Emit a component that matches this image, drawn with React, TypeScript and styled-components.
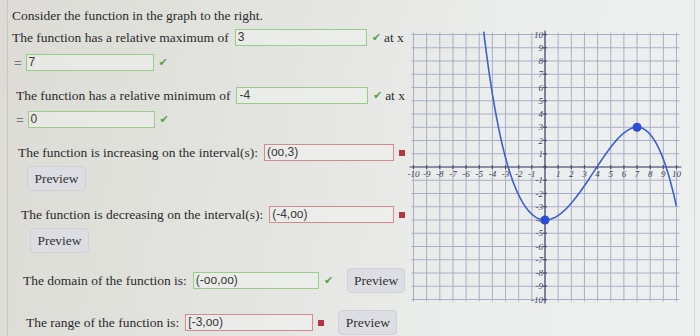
import React from 'react';
import styled, { createGlobalStyle } from 'styled-components';

const GlobalStyle = createGlobalStyle`
  html, body {
    margin: 0;
    padding: 0;
    width: 700px;
    height: 336px;
    overflow: hidden;
    background: #e2e2dd;
  }
`;

const Page = styled.div`
  width: 700px;
  height: 336px;
  display: flex;
  background: linear-gradient(100deg, #dcdbd5 0%, #e4e5e1 40%, #eceeed 70%, #eef0f0 100%);
  font-family: 'Liberation Serif', 'Times New Roman', serif;
  color: #2b2b2b;
`;

const Panel = styled.div`
  margin-left: 7px;
  width: 686px;
  border-left: 1px solid #c9c9c3;
  border-right: 1px solid #d6d8d8;
  display: flex;
`;

const Form = styled.div`
  width: 397px;
  display: flex;
  flex-direction: column;
`;

const Row = styled.div<{ $mt: number; $indent: number }>`
  display: flex;
  align-items: center;
  margin-top: ${(p) => p.$mt}px;
  padding-left: ${(p) => p.$indent}px;
  font-size: 13.5px;
  line-height: 17px;
  white-space: nowrap;
`;

const Label = styled.span`
  margin-right: 6px;
`;

const Equals = styled.span`
  font-family: 'Liberation Sans', Arial, sans-serif;
  color: #777;
  font-size: 13px;
  margin-right: 4px;
`;

const Field = styled.div<{ $ok: boolean; $w: number }>`
  width: ${(p) => p.$w}px;
  height: 15px;
  box-sizing: content-box;
  border: 1px solid ${(p) => (p.$ok ? '#96cf86' : '#d68a90')};
  background: rgba(240, 242, 240, 0.55);
  font-family: 'Liberation Sans', Arial, sans-serif;
  font-size: 12px;
  line-height: 15px;
  padding: 0 2px;
  color: #3a3a3a;
`;

const Check = styled.span`
  color: #55a548;
  font-size: 11px;
  margin-left: 5px;
  font-family: 'DejaVu Sans', sans-serif;
  font-weight: bold;
`;

const Cross = styled.span`
  display: inline-block;
  width: 6px;
  height: 6px;
  margin-left: 5px;
  background: #b73444;
`;

const AtX = styled.span`
  margin-left: 3px;
`;

const PreviewButton = styled.div<{ $ml?: number }>`
  display: inline-flex;
  align-items: center;
  justify-content: center;
  width: 57px;
  height: 23px;
  margin-left: ${(p) => p.$ml ?? 0}px;
  border: 1px solid #cfd1d6;
  border-radius: 4px;
  background: #dcdee3;
  font-size: 13.5px;
  color: #333;
`;

const GraphWrap = styled.div`
  margin-top: 14px;
`;

// coordinate mapping for graph svg
const UX = 13.15;
const UY = 13.25;
const OX = 140;
const OY = 153;
const X = (x: number) => OX + x * UX;
const Y = (y: number) => OY - y * UY;

const f = (x: number) => {
  if (x <= 0) return -4 + 0.4286 * x * x + 0.0104 * x ** 4;
  return -4 + 0.3719 * x * x - 0.02463 * x ** 3 - 0.001156 * x ** 4;
};

function Graph() {
  const ticks = Array.from({ length: 21 }, (_, i) => i - 10);
  const pts: string[] = [];
  for (let x = -4.66; x <= 10.001; x += 0.05) {
    pts.push(`${X(x).toFixed(2)},${Y(f(x)).toFixed(2)}`);
  }
  return (
    <svg width="290" height="300" viewBox="0 0 290 300">
      <g stroke="#9ea4c2" strokeWidth="1" opacity="0.85">
        {ticks.map((t) => (
          <line key={'v' + t} x1={X(t)} y1={Y(10) - 2} x2={X(t)} y2={Y(-10) + 2} />
        ))}
        {ticks.map((t) => (
          <line key={'h' + t} x1={X(-10) - 2} y1={Y(t)} x2={X(10) + 3} y2={Y(t)} />
        ))}
      </g>
      <g stroke="#4a4e6e" strokeWidth="1.2">
        <line x1={X(-10) - 4} y1={Y(0)} x2={X(10) + 5} y2={Y(0)} />
        <line x1={X(0)} y1={Y(10) - 4} x2={X(0)} y2={Y(-10) + 4} />
        {ticks.map((t) => (
          <line key={'tx' + t} x1={X(t)} y1={Y(0) - 2} x2={X(t)} y2={Y(0) + 2} />
        ))}
        {ticks.map((t) => (
          <line key={'ty' + t} x1={X(0) - 2} y1={Y(t)} x2={X(0) + 2} y2={Y(t)} />
        ))}
      </g>
      <g
        fill="#3c3f58"
        fontFamily="'Liberation Serif', serif"
        fontStyle="italic"
        fontSize="9"
      >
        {ticks
          .filter((t) => t !== 0)
          .map((t) => (
            <text key={'lx' + t} x={X(t)} y={Y(0) + 10} textAnchor="middle">
              {t}
            </text>
          ))}
        {ticks
          .filter((t) => t !== 0)
          .map((t) => (
            <text key={'ly' + t} x={X(0) - 2} y={Y(t) + 3} textAnchor="end">
              {t}
            </text>
          ))}
      </g>
      <polyline points={pts.join(' ')} fill="none" stroke="#3b5fd0" strokeWidth="1.6" />
      <circle cx={X(7)} cy={Y(3)} r="4.5" fill="#2a4fd6" />
      <circle cx={X(0)} cy={Y(-4)} r="4.5" fill="#2a4fd6" />
    </svg>
  );
}

export default function App() {
  return (
    <Page>
      <GlobalStyle />
      <Panel>
        <Form>
          <Row $mt={7} $indent={4}>
            Consider the function in the graph to the right.
          </Row>
          <Row $mt={5} $indent={4}>
            <Label>The function has a relative maximum of</Label>
            <Field $ok $w={126}>3</Field>
            <Check>✔</Check>
            <AtX>at x</AtX>
          </Row>
          <Row $mt={8} $indent={6}>
            <Equals>=</Equals>
            <Field $ok $w={122}>7</Field>
            <Check>✔</Check>
          </Row>
          <Row $mt={16} $indent={8}>
            <Label>The function has a relative minimum of</Label>
            <Field $ok $w={127}>-4</Field>
            <Check>✔</Check>
            <AtX>at x</AtX>
          </Row>
          <Row $mt={7} $indent={8}>
            <Equals>=</Equals>
            <Field $ok $w={121}>0</Field>
            <Check>✔</Check>
          </Row>
          <Row $mt={16} $indent={10}>
            <Label>The function is increasing on the interval(s):</Label>
            <Field $ok={false} $w={126}>(oo,3)</Field>
            <Cross />
          </Row>
          <Row $mt={5} $indent={19}>
            <PreviewButton>Preview</PreviewButton>
          </Row>
          <Row $mt={15} $indent={13}>
            <Label>The function is decreasing on the interval(s):</Label>
            <Field $ok={false} $w={126}>(-4,oo)</Field>
            <Cross />
          </Row>
          <Row $mt={5} $indent={22}>
            <PreviewButton>Preview</PreviewButton>
          </Row>
          <Row $mt={15} $indent={15}>
            <Label>The domain of the function is:</Label>
            <Field $ok $w={123}>(-oo,oo)</Field>
            <Check>✔</Check>
            <PreviewButton $ml={14}>Preview</PreviewButton>
          </Row>
          <Row $mt={17} $indent={18}>
            <Label>The range of the function is:</Label>
            <Field $ok={false} $w={122}>[-3,oo)</Field>
            <Cross />
            <PreviewButton $ml={14}>Preview</PreviewButton>
          </Row>
        </Form>
        <GraphWrap>
          <Graph />
        </GraphWrap>
      </Panel>
    </Page>
  );
}
